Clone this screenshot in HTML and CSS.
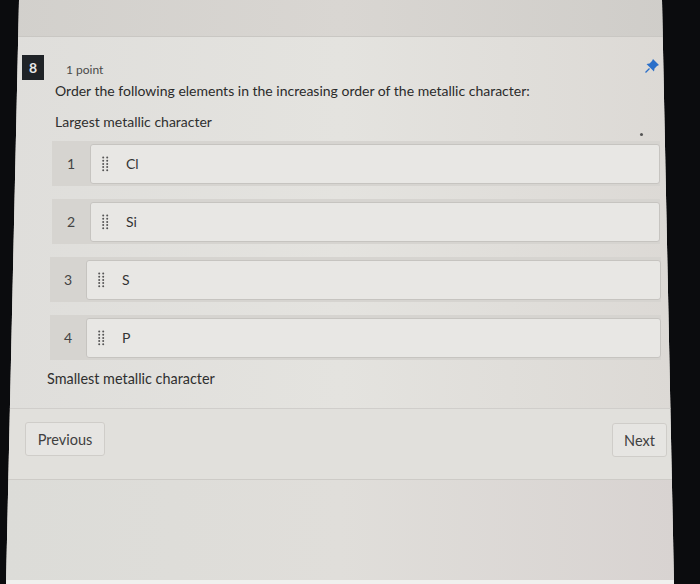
FILE: index.html
```html
<!DOCTYPE html>
<html>
<head>
<meta charset="utf-8">
<link rel="stylesheet" href="styles.css">
</head>
<body>
<div class="screen">
  <div class="topbar"></div>
  <div class="content">
    <div class="qhead">
      <div class="badge">8</div>
      <div class="points">1 point</div>
      <svg class="pin" width="16" height="16" viewBox="0 0 16 16">
        <path d="M9 1 L15 7 L13 8 L10.5 10.5 L10 13.5 L2.5 6 L5.5 5.5 L8 3 Z" fill="#2a6fc9"/>
        <path d="M5.5 10.5 L1.5 14.5" stroke="#2a6fc9" stroke-width="1.3"/>
      </svg>
    </div>
    <div class="prompt">Order the following elements in the increasing order of the metallic character:</div>
    <div class="label top">Largest metallic character</div>
    <div class="dot"></div>
    <div class="rows">
      <div class="row"><span class="num">1</span><div class="box"><svg class="grip" width="7" height="16" viewBox="0 0 7 16"><g fill="#555"><circle cx="1.2" cy="1.5" r="1"/><circle cx="5.2" cy="1.5" r="1"/><circle cx="1.2" cy="4.7" r="1"/><circle cx="5.2" cy="4.7" r="1"/><circle cx="1.2" cy="7.9" r="1"/><circle cx="5.2" cy="7.9" r="1"/><circle cx="1.2" cy="11.1" r="1"/><circle cx="5.2" cy="11.1" r="1"/><circle cx="1.2" cy="14.3" r="1"/><circle cx="5.2" cy="14.3" r="1"/></g></svg><span class="item">Cl</span></div></div>
      <div class="row"><span class="num">2</span><div class="box"><svg class="grip" width="7" height="16" viewBox="0 0 7 16"><g fill="#555"><circle cx="1.2" cy="1.5" r="1"/><circle cx="5.2" cy="1.5" r="1"/><circle cx="1.2" cy="4.7" r="1"/><circle cx="5.2" cy="4.7" r="1"/><circle cx="1.2" cy="7.9" r="1"/><circle cx="5.2" cy="7.9" r="1"/><circle cx="1.2" cy="11.1" r="1"/><circle cx="5.2" cy="11.1" r="1"/><circle cx="1.2" cy="14.3" r="1"/><circle cx="5.2" cy="14.3" r="1"/></g></svg><span class="item">Si</span></div></div>
      <div class="row r3"><span class="num">3</span><div class="box"><svg class="grip" width="7" height="16" viewBox="0 0 7 16"><g fill="#555"><circle cx="1.2" cy="1.5" r="1"/><circle cx="5.2" cy="1.5" r="1"/><circle cx="1.2" cy="4.7" r="1"/><circle cx="5.2" cy="4.7" r="1"/><circle cx="1.2" cy="7.9" r="1"/><circle cx="5.2" cy="7.9" r="1"/><circle cx="1.2" cy="11.1" r="1"/><circle cx="5.2" cy="11.1" r="1"/><circle cx="1.2" cy="14.3" r="1"/><circle cx="5.2" cy="14.3" r="1"/></g></svg><span class="item">S</span></div></div>
      <div class="row r4"><span class="num">4</span><div class="box"><svg class="grip" width="7" height="16" viewBox="0 0 7 16"><g fill="#555"><circle cx="1.2" cy="1.5" r="1"/><circle cx="5.2" cy="1.5" r="1"/><circle cx="1.2" cy="4.7" r="1"/><circle cx="5.2" cy="4.7" r="1"/><circle cx="1.2" cy="7.9" r="1"/><circle cx="5.2" cy="7.9" r="1"/><circle cx="1.2" cy="11.1" r="1"/><circle cx="5.2" cy="11.1" r="1"/><circle cx="1.2" cy="14.3" r="1"/><circle cx="5.2" cy="14.3" r="1"/></g></svg><span class="item">P</span></div></div>
    </div>
    <div class="label bottom">Smallest metallic character</div>
  </div>
  <div class="nav">
    <button class="btn prev">Previous</button>
    <button class="btn next">Next</button>
  </div>
  <div class="footer"></div>
</div>
</body>
</html>
```

FILE: styles.css
```css
html, body {
  margin: 0;
  padding: 0;
  background: #0b0c0e;
  width: 700px;
  height: 584px;
  overflow: hidden;
}
.screen {
  margin-left: 6px;
  width: 669px;
  height: 584px;
  background: #e1dfdb;
  display: flex;
  flex-direction: column;
  font-family: Lato, "Open Sans", sans-serif;
  color: #3a3a3a;
  clip-path: polygon(13px 0, 656px 0, 668px 100%, 0 100%);
}
.topbar {
  height: 36px;
  background: linear-gradient(90deg, #d2d0cc, #d9d6d2 50%, #cfcdc9);
  border-bottom: 1px solid #c9c7c3;
  flex-shrink: 0;
}
.content {
  position: relative;
  padding-top: 18px;
  background: linear-gradient(90deg, #dfdedb, #e4e3df 50%, #dcd9d5);
}
.qhead {
  display: flex;
  align-items: center;
  height: 26px;
  position: relative;
}
.badge {
  width: 22px;
  height: 25px;
  margin-left: 16px;
  margin-top: -2px;
  background: #1f2327;
  color: #e8e8e8;
  font-size: 14px;
  font-weight: 700;
  display: flex;
  align-items: center;
  justify-content: center;
}
.points {
  margin-left: 22px;
  font-size: 12px;
  color: #4a4a4a;
  margin-top: 2px;
}
.pin {
  position: absolute;
  left: 638px;
  top: 3px;
}
.dot {
  position: absolute;
  left: 634px;
  top: 96px;
  width: 3px;
  height: 3px;
  border-radius: 50%;
  background: #555;
}
.prompt {
  margin-left: 49px;
  margin-top: 0;
  font-size: 14px;
  line-height: 20px;
  color: #2b2b2b;
}
.label {
  font-size: 14px;
  line-height: 20px;
  color: #2f2f2f;
}
.label.top {
  margin-left: 49px;
  margin-top: 11px;
}
.label.bottom {
  margin-left: 41px;
  margin-top: 9px;
  padding-bottom: 19px;
  font-size: 14.4px;
}
.rows {
  margin-top: 9px;
  display: flex;
  flex-direction: column;
  gap: 13px;
}
.row {
  margin-left: 46px;
  width: 608px;
  height: 45px;
  background: #d6d4d0;
  display: flex;
  align-items: center;
}
.row.r3, .row.r4 {
  margin-left: 44px;
  width: 611px;
}
.num {
  width: 38px;
  text-align: center;
  font-size: 14px;
  color: #444;
}
.r3 .num, .r4 .num { width: 36px; }
.box {
  flex: 1;
  height: 38px;
  background: #e8e7e4;
  border: 1px solid #c6c4c0;
  border-radius: 3px;
  display: flex;
  align-items: center;
}
.grip {
  margin-left: 11px;
  flex-shrink: 0;
}
.item {
  margin-left: 17px;
  font-size: 14px;
  color: #333;
}
.nav {
  border-top: 1px solid #d0cecb;
  display: flex;
  justify-content: space-between;
  align-items: flex-start;
  height: 57px;
  padding-top: 13px;
  padding-left: 19px;
  padding-right: 8px;
  background: #e1e0dc;
}
.btn {
  font-family: Lato, "Open Sans", sans-serif;
  font-size: 14.5px;
  color: #404040;
  background: #e6e5e2;
  border: 1px solid #cfcdc9;
  border-radius: 3px;
  height: 34px;
  padding: 0 8px;
}
.btn.prev { width: 80px; }
.btn.next { width: 55px; margin-top: 1px; }
.footer {
  flex: 1;
  border-top: 1px solid #cdcbc7;
  background: linear-gradient(90deg, #dcdcd8, #e0deda 50%, #d8d3d1);
  border-bottom: 4px solid #f0f0ee;
}
```
